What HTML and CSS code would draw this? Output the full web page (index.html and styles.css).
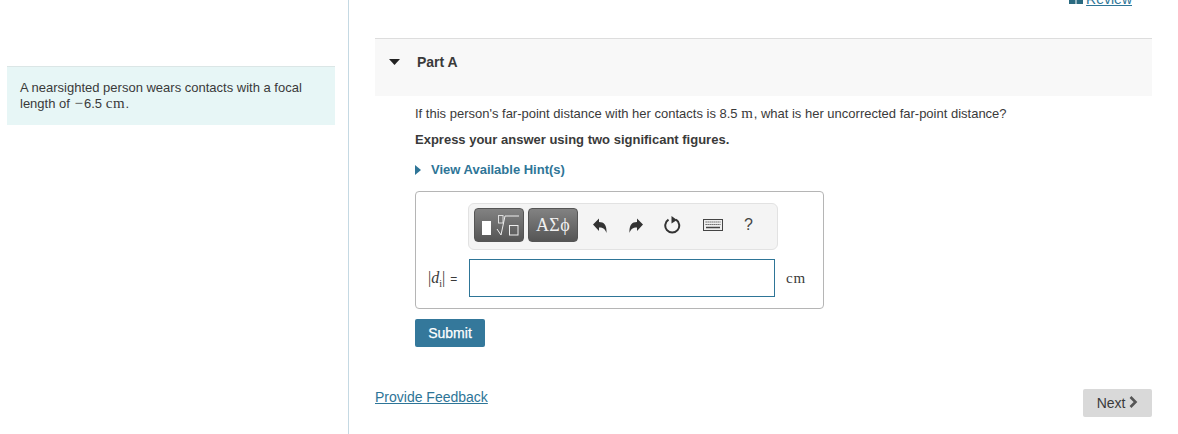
FILE: index.html
```html
<!DOCTYPE html>
<html lang="en">
<head>
<meta charset="utf-8">
<title>Part A</title>
<link rel="stylesheet" href="styles.css">
</head>
<body>
<div class="page">
  <aside class="left">
    <div class="note">A nearsighted person wears contacts with a focal length of <span class="minus">&minus;</span>6.5 <span class="unit-text">cm</span>.</div>
  </aside>
  <main class="right">
    <div class="review-row">
      <svg class="book" width="14" height="5" viewBox="0 0 14 5"><path d="M0 0h6.500v4H0zM7.500 0H14v4H7.500z" fill="#2a6a80"/></svg>
      <a class="review" href="#">Review</a>
    </div>
    <section class="part">
      <svg class="caret-down" width="11" height="6" viewBox="0 0 11 6"><path d="M0 0h11L5.500 6z" fill="#222"/></svg>
      <h2 class="part-title">Part A</h2>
    </section>
    <div class="content">
      <p class="question">If this person's far-point distance with her contacts is 8.5 <span class="unit-text">m</span>, what is her uncorrected far-point distance?</p>
      <p class="instruction">Express your answer using two significant figures.</p>
      <div class="hint">
        <svg width="6" height="10" viewBox="0 0 6 10"><path d="M0 0l6 5-6 5z" fill="#2e7597"/></svg>
        <a class="hint-link" href="#">View Available Hint(s)</a>
      </div>
      <div class="answer">
        <div class="toolbar">
          <button class="tool" type="button" aria-label="Templates">
            <svg width="48" height="32" viewBox="0 0 48 32">
              <rect x="7" y="12" width="9" height="14" fill="#fff"/>
              <rect x="23.500" y="6.500" width="4.500" height="7.500" fill="none" stroke="#ddd" stroke-width="1"/>
              <path d="M22 20l4 6 4-19h14" fill="none" stroke="#eee" stroke-width="1"/>
              <rect x="34.500" y="16.500" width="8.500" height="9.500" fill="none" stroke="#eee" stroke-width="1"/>
            </svg>
          </button>
          <button class="tool tool-greek" type="button">ΑΣϕ</button>
          <div class="actions">
            <svg width="14" height="15" viewBox="0 0 14 15"><path d="M0 6.500L6 .5V4c5 0 8 3 7.500 11C12 11 10.500 9.500 6 9.500V13z" fill="#333"/></svg>
            <svg width="14" height="15" viewBox="0 0 14 15"><path d="M14 6.500L8 .5V4C3 4 0 7 .5 15 2 11 3.500 9.500 8 9.500V13z" fill="#333"/></svg>
            <svg width="17" height="18" viewBox="0 0 17 18"><path d="M12 3.700a7 7 0 1 1-7.500 0" fill="none" stroke="#333" stroke-width="2"/><path d="M7.500 0l5.500 4-5.500 3.500z" fill="#333"/></svg>
            <svg width="20" height="12" viewBox="0 0 20 12"><rect x=".5" y=".5" width="19" height="11" fill="#eee" stroke="#444"/><path d="M2.500 3h15M2.500 5.500h15" stroke="#555" stroke-width="1.200" stroke-dasharray="1.300 .7"/><path d="M3 8.500h14" stroke="#444" stroke-width="1.500"/></svg>
            <span class="help">?</span>
          </div>
        </div>
        <div class="input-row">
          <span class="label"><span class="var">|<i>d</i><sub>i</sub>|</span><span class="eq">=</span></span>
          <div class="field"></div>
          <span class="unit-text unit">cm</span>
        </div>
      </div>
      <button class="submit" type="button">Submit</button>
    </div>
    <div class="foot">
      <a class="feedback" href="#">Provide Feedback</a>
      <button class="next" type="button">Next
        <svg width="9" height="12" viewBox="0 0 9 12"><path d="M1.500 1l5 5-5 5" fill="none" stroke="#555" stroke-width="2.600"/></svg>
      </button>
    </div>
  </main>
</div>
</body>
</html>
```
FILE: styles.css
```css
html, body {
  margin: 0;
  height: 434px;
  overflow: hidden;
  background: #fff;
}
body {
  font-family: "Liberation Sans", Arial, sans-serif;
  font-size: 13px;
  color: #3a3a3a;
}
p, h2 { margin: 0; }
a { color: #2e7597; }
.page {
  display: flex;
  height: 434px;
}
.left {
  box-sizing: border-box;
  width: 349px;
  flex: none;
  padding: 66px 13px 0 7px;
  border-right: 1px solid #c5d9e3;
}
.note {
  background: #e7f6f6;
  border-top: 1px solid #dbe6e6;
  padding: 13px;
  height: 32px;
  line-height: 16px;
}
.minus {
  font-family: "Liberation Serif", serif;
  font-size: 15px;
  line-height: 1;
  margin: 0 1px;
}
.unit-text {
  font-family: "Liberation Serif", serif;
  font-size: 15px;
  line-height: 1;
  letter-spacing: .8px;
}
.right {
  box-sizing: border-box;
  width: 777px;
  margin-left: 26px;
  display: flex;
  flex-direction: column;
}
.review-row {
  height: 38px;
  display: flex;
  justify-content: flex-end;
  align-items: flex-start;
  gap: 3px;
  padding-right: 20px;
}
.review {
  font-size: 14px;
  line-height: 14px;
  margin-top: -8px;
}
.part {
  background: #f8f8f8;
  border-top: 1px solid #ddd;
  height: 57px;
  display: flex;
  align-items: flex-start;
  padding: 0 0 0 14px;
}
.caret-down { margin-top: 20px; }
.part-title {
  font-size: 14px;
  line-height: 16px;
  font-weight: bold;
  margin: 15px 0 0 17px;
}
.content { padding: 9px 0 0 40px; }
.question { line-height: 17px; }
.instruction {
  font-weight: bold;
  line-height: 16px;
  margin-top: 10px;
}
.hint {
  display: flex;
  align-items: center;
  gap: 10px;
  margin-top: 14px;
  line-height: 16px;
}
.hint-link {
  font-weight: bold;
  text-decoration: none;
}
.answer {
  box-sizing: border-box;
  width: 409px;
  height: 118px;
  margin-top: 13px;
  padding: 11px 0 0;
  border: 1px solid #b5b5b5;
  border-radius: 4px;
}
.toolbar {
  box-sizing: border-box;
  width: 310px;
  height: 47px;
  margin-left: 52px;
  padding: 4px 5px;
  display: flex;
  gap: 4px;
  align-items: flex-start;
  background: #f4f4f4;
  border: 1px solid #e2e2e2;
  border-radius: 6px;
}
.tool {
  box-sizing: border-box;
  width: 50px;
  height: 34px;
  padding: 0;
  border: 1px solid #555;
  border-radius: 4px;
  background: linear-gradient(#828282, #555);
  display: flex;
  align-items: center;
  justify-content: center;
  flex: none;
}
.tool-greek {
  color: #f0f0f0;
  font-family: "Liberation Serif", serif;
  font-size: 18px;
  letter-spacing: .4px;
}
.actions {
  display: flex;
  align-items: center;
  justify-content: space-between;
  width: 160px;
  height: 34px;
  margin-left: 11px;
}
.help {
  font-size: 16px;
  color: #444;
}
.input-row {
  display: flex;
  align-items: center;
  margin-top: 9px;
}
.label {
  width: 53px;
  box-sizing: border-box;
  padding-left: 12px;
  white-space: nowrap;
}
.var {
  font-family: "Liberation Serif", serif;
  font-size: 16px;
}
.var sub { font-size: 10px; line-height: 0; }
.eq { font-size: 12px; margin-left: 5px; }
.field {
  box-sizing: border-box;
  width: 306px;
  height: 38px;
  background: #fff;
  border: 1px solid #2e7597;
}
.unit { margin-left: 11px; }
.submit {
  display: block;
  width: 70px;
  height: 28px;
  margin-top: 10px;
  padding: 0;
  border: none;
  border-radius: 2px;
  background: #34789b;
  color: #fff;
  font: 14px "Liberation Sans", Arial, sans-serif;
  -webkit-text-stroke: .25px #fff;
}
.foot {
  display: flex;
  justify-content: space-between;
  align-items: flex-start;
  margin-top: 42px;
}
.feedback { font-size: 14px; line-height: 16px; }
.next {
  width: 69px;
  height: 28px;
  padding: 0;
  border: none;
  border-radius: 2px;
  background: #d9d9d9;
  color: #3a3a3a;
  font: 14px "Liberation Sans", Arial, sans-serif;
}
```
